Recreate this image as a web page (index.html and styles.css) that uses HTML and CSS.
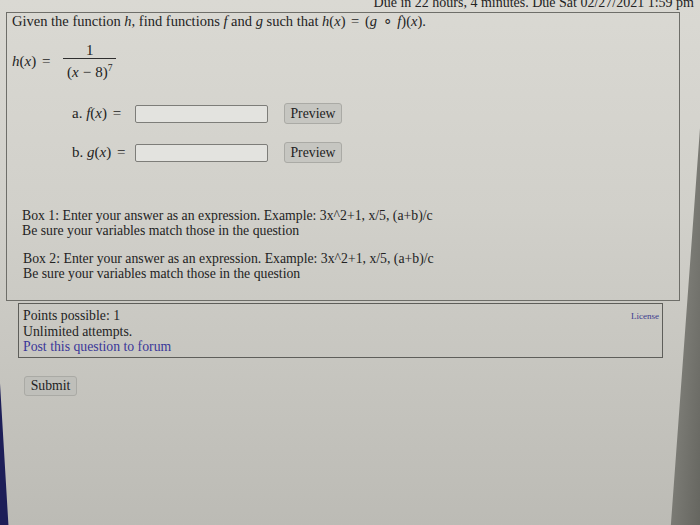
FILE: index.html
```html
<!DOCTYPE html>
<html lang="en">
<head>
<meta charset="utf-8">
<title>Question</title>
<link rel="stylesheet" href="styles.css">
</head>
<body>
<div class="due">Due in 22 hours, 4 minutes. Due Sat 02/27/2021 1:59 pm</div>
<div class="question">
  <p class="prompt">Given the function <i class="m">h</i>, find functions <i class="m">f</i> and <i class="m">g</i> such that <i class="m">h</i>(<i class="m">x</i>) <span class="op">=</span> (<i class="m">g</i> <span class="op">∘</span> <i class="m">f</i>)(<i class="m">x</i>).</p>
  <div class="formula">
    <span class="lhs"><i class="m">h</i>(<i class="m">x</i>) <span class="op">=</span></span>
    <span class="frac"><span class="num">1</span><span class="den">(<i class="m">x</i><span class="op">−</span>8)<sup class="pow">7</sup></span></span>
  </div>
  <div class="answers">
    <div class="row"><span class="label">a. <i class="m">f</i>(<i class="m">x</i>) <span class="op">=</span></span><input class="field" type="text"><button class="btn preview" type="button">Preview</button></div>
    <div class="row"><span class="label">b. <i class="m">g</i>(<i class="m">x</i>) <span class="op">=</span></span><input class="field" type="text"><button class="btn preview" type="button">Preview</button></div>
  </div>
  <div class="hints">
    <p class="hint">Box 1: Enter your answer as an expression. Example: 3x^2+1, x/5, (a+b)/c<br>Be sure your variables match those in the question</p>
    <p class="hint second">Box 2: Enter your answer as an expression. Example: 3x^2+1, x/5, (a+b)/c<br>Be sure your variables match those in the question</p>
  </div>
</div>
<div class="info">
  <div class="info-text">
    <div>Points possible: 1</div>
    <div>Unlimited attempts.</div>
    <a class="link" href="#">Post this question to forum</a>
  </div>
  <a class="license" href="#">License</a>
</div>
<div class="actions"><button class="btn submit" type="button">Submit</button></div>
</body>
</html>
```
FILE: styles.css
```css
html {
  height: 100%;
  background:
    linear-gradient(94.2deg, transparent 707px, #7a7a74 708px, #63635d 740px),
    linear-gradient(266.6deg, transparent 721px, #1d1e58 722px),
    linear-gradient(#dad9d3 0%, #d1d0ca 40%, #bcbbb5 100%);
}
body {
  margin: 0;
  height: 100%;
  overflow: hidden;
  font-family: "Liberation Serif", "Times New Roman", serif;
  font-size: 13.75px;
  color: #232323;
}
.due {
  margin-top: -4px;
  height: 16px;
  line-height: 14px;
  font-size: 14px;
  text-align: right;
  padding-right: 6px;
  white-space: nowrap;
}
.question {
  margin: 0 20px 0 6px;
  border: 1px solid #6e6e69;
  padding: 0 0 19px 5px;
}
.m { font-style: italic; }
.op { padding: 0 2px; }
.prompt {
  margin: 0;
  font-size: 14.5px;
  line-height: 16px;
}
.formula {
  display: flex;
  align-items: center;
  margin-top: 14px;
  font-size: 15px;
}
.lhs { width: 51px; }
.frac {
  display: inline-flex;
  flex-direction: column;
  align-items: stretch;
  text-align: center;
}
.num {
  line-height: 15px;
  border-bottom: 1px solid #2e2e2e;
  padding: 0 4px;
}
.den {
  line-height: 15px;
  padding: 6px 4px 0;
}
.den .op { padding: 0 4px; }
.pow {
  font-size: 9.5px;
  line-height: 0;
  vertical-align: 6px;
}
.answers {
  margin-top: 23px;
  padding-left: 60px;
  display: flex;
  flex-direction: column;
  gap: 18px;
}
.row {
  display: flex;
  align-items: center;
  height: 21px;
}
.label {
  width: 63px;
  font-size: 15px;
}
.field {
  box-sizing: border-box;
  width: 133px;
  height: 18px;
  margin: 0;
  border: 1px solid #7d7d79;
  border-radius: 2px;
  background: #e3e3df;
}
.btn {
  box-sizing: border-box;
  margin: 0;
  font-family: "Liberation Serif", "Times New Roman", serif;
  font-size: 13.75px;
  color: #222;
  background: #c6c6c1;
  border: 1px solid #aaaaa5;
  border-radius: 3px;
  padding: 0;
}
.preview {
  width: 58px;
  height: 21px;
  margin-left: 16px;
}
.hints {
  margin-top: 45px;
  padding-left: 10px;
}
.hint {
  margin: 0;
  line-height: 15px;
}
.hint.second {
  margin-top: 13px;
  padding-left: 1px;
}
.info {
  margin: 2px 37px 0 18px;
  border: 1px solid #5e5e5a;
  padding: 4px 3px 2px 4px;
  display: flex;
  justify-content: space-between;
  align-items: flex-start;
  line-height: 15.5px;
}
.link {
  color: #3a3799;
  text-decoration: none;
}
.license {
  font-size: 9px;
  line-height: 12px;
  color: #3d3b8e;
  text-decoration: none;
  padding-top: 2px;
}
.actions {
  margin-top: 18px;
  padding-left: 24px;
}
.submit {
  width: 53px;
  height: 20px;
  background: #bfbfba;
}
```
